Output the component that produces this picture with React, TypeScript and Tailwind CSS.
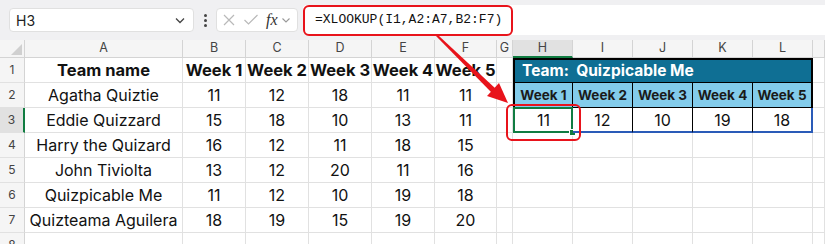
import React from "react";
import clsx from "clsx";

const W = ["w-[158px]", "w-[63px]", "w-[63px]", "w-[63px]", "w-[63px]", "w-[62px]", "w-[16px]", "w-[60px]", "w-[60px]", "w-[60px]", "w-[60px]", "w-[60px]", "w-[12px]"];
const LETTERS = ["A", "B", "C", "D", "E", "F", "G", "H", "I", "J", "K", "L", ""];

const rows: (string | number)[][] = [
  ["Team name", "Week 1", "Week 2", "Week 3", "Week 4", "Week 5"],
  ["Agatha Quiztie", 11, 12, 18, 11, 11],
  ["Eddie Quizzard", 15, 18, 10, 13, 11],
  ["Harry the Quizard", 16, 12, 11, 18, 15],
  ["John Tiviolta", 13, 12, 20, 11, 16],
  ["Quizpicable Me", 11, 12, 10, 19, 18],
  ["Quizteama Aguilera", 18, 19, 15, 19, 20],
  ["", "", "", "", "", ""],
];

const result = [11, 12, 10, 19, 18];

const font = "font-['Inter','Noto_Sans',sans-serif]";

function Grid({ i, className, children }: { i: number; className?: string; children?: React.ReactNode }) {
  return (
    <div className={clsx(W[i], "h-full shrink-0 flex items-center justify-center border-r border-b border-[#e1e1e1]", className)}>
      {children}
    </div>
  );
}

function RowHead({ n, active }: { n: number; active?: boolean }) {
  return (
    <div
      className={clsx(
        "w-[25px] h-full shrink-0 flex items-center justify-center text-[12px] text-[#444] border-b border-[#e1e1e1]",
        active ? "bg-[#e1e1e1] border-r-2 border-r-[#107c41]" : "bg-[#f5f5f5] border-r border-r-[#d4d4d4]"
      )}
    >
      {n}
    </div>
  );
}

function TeamCells({ r }: { r: number }) {
  if (r === 0) {
    return (
      <div className="w-[300px] h-full shrink-0 flex items-center pl-[7px] bg-[#0f6f94] border-t-2 border-l-2 border-r-2 border-b border-black text-white font-bold text-[15.5px]">
        <span className="whitespace-pre">Team:  Quizpicable Me</span>
      </div>
    );
  }
  if (r === 1) {
    return (
      <>
        {[7, 8, 9, 10, 11].map((c, k) => (
          <div
            key={c}
            className={clsx(
              W[c],
              "h-full shrink-0 flex items-center justify-center bg-[#83cceb] border-b border-r border-black font-bold text-[13.5px] text-[#1a1a1a]",
              k === 0 && "border-l-2",
              k === 4 && "border-r-2"
            )}
          >
            {"Week " + (k + 1)}
          </div>
        ))}
      </>
    );
  }
  return (
    <>
      {[7, 8, 9, 10, 11].map((c, k) => (
        <div
          key={c}
          className={clsx(
            W[c],
            "relative h-full shrink-0 flex items-center justify-center bg-white border-b-2 border-b-[#2a5bb8] border-r border-black text-[16px] text-[#111]",
            k === 0 && "border-l-2",
            k === 4 && "border-r-2 border-r-[#2a5bb8]"
          )}
        >
          {result[k]}
          {k === 0 && (
            <>
              <div className="absolute -left-[2px] -top-[1px] -right-[1px] -bottom-[2px] border-2 border-[#107c41]" />
              <div className="absolute -right-[4px] -bottom-[5px] w-[7px] h-[7px] bg-[#107c41] border border-white" />
            </>
          )}
        </div>
      ))}
    </>
  );
}

export default function App() {
  return (
    <div className={clsx("relative w-[825px] h-[244px] overflow-hidden bg-white text-[#111]", font)}>
      {/* formula bar */}
      <div className="h-[40px] bg-[#f0f0f2] flex items-center">
        <div className="ml-[9px] w-[185px] h-[24px] bg-white rounded-[4px] border border-[#e0e0e0] flex items-center justify-between px-[6px]">
          <span className="text-[14px] text-[#222]">H3</span>
          <svg width="12" height="12" viewBox="0 0 12 12" className="mr-[1px]">
            <path d="M2 4.5 L6 8.5 L10 4.5" fill="none" stroke="#444" strokeWidth="1.3" />
          </svg>
        </div>
        <div className="w-[22px] flex flex-col items-center gap-[2px]">
          <span className="w-[3px] h-[3px] rounded-full bg-[#444]" />
          <span className="w-[3px] h-[3px] rounded-full bg-[#444]" />
          <span className="w-[3px] h-[3px] rounded-full bg-[#444]" />
        </div>
        <div className="w-[82px] h-[24px] bg-white rounded-[4px] border border-[#e0e0e0] flex items-center pl-[5px]">
          <svg width="14" height="14" viewBox="0 0 14 14">
            <path d="M2 2 L12 12 M12 2 L2 12" stroke="#b9b9b9" strokeWidth="1.2" />
          </svg>
          <svg width="16" height="14" viewBox="0 0 16 14" className="ml-[7px]">
            <path d="M1.5 7 L5.5 11 L14.5 2" fill="none" stroke="#b9b9b9" strokeWidth="1.2" />
          </svg>
          <span className="ml-[7px] font-['Liberation_Serif',serif] italic text-[16px] text-[#333] leading-none">fx</span>
          <svg width="10" height="10" viewBox="0 0 10 10" className="ml-[3px]">
            <path d="M1.5 3.5 L5 7 L8.5 3.5" fill="none" stroke="#999" strokeWidth="1.1" />
          </svg>
        </div>
        <div className="ml-[5px] flex-1 h-[30px] bg-white rounded-l-[4px] flex items-center pl-[12px]">
          <span className="font-['Liberation_Mono',monospace] text-[13px] text-[#111]">=XLOOKUP(I1,A2:A7,B2:F7)</span>
        </div>
      </div>

      {/* column headers */}
      <div className="flex h-[18px] bg-[#f5f5f5] text-[12.5px] text-[#444]">
        <div className="relative w-[25px] h-full shrink-0 border-r border-b border-[#d4d4d4]">
          <div className="absolute right-[2px] bottom-[2px] w-0 h-0 border-l-[11px] border-l-transparent border-b-[11px] border-b-[#d0d0d0]" />
        </div>
        {LETTERS.map((l, i) => (
          <div
            key={i}
            className={clsx(
              W[i],
              "h-full shrink-0 flex items-center justify-center border-r border-[#d4d4d4]",
              i === 7 ? "bg-[#e1e1e1] border-b-2 border-b-[#107c41]" : "border-b"
            )}
          >
            {l}
          </div>
        ))}
      </div>

      {/* sheet rows */}
      {rows.map((r, ri) => (
        <div key={ri} className="flex h-[25px]">
          <RowHead n={ri + 1} active={ri === 2} />
          {r.map((v, ci) => (
            <Grid key={ci} i={ci} className={clsx(ri === 0 ? "font-bold text-[16.5px]" : "text-[16px]")}>
              {v}
            </Grid>
          ))}
          <Grid i={6} />
          {ri < 3 ? (
            <TeamCells r={ri} />
          ) : (
            [7, 8, 9, 10, 11].map((c) => <Grid key={c} i={c} />)
          )}
          <Grid i={12} />
        </div>
      ))}

      {/* callouts */}
      <div className="absolute left-[303px] top-[5px] w-[210px] h-[31px] border-2 border-[#e8131b] rounded-[6px] pointer-events-none" />
      <div className="absolute left-[506px] top-[104px] w-[75px] h-[37px] border-2 border-[#e8131b] rounded-[6px] pointer-events-none" />
      <svg className="absolute left-0 top-0 pointer-events-none" width="825" height="244">
        <polygon points="436,36 439,36 496,89 492,93" fill="#e8131b" />
        <polygon points="508,103 487,96 499,83" fill="#e8131b" />
      </svg>
    </div>
  );
}
